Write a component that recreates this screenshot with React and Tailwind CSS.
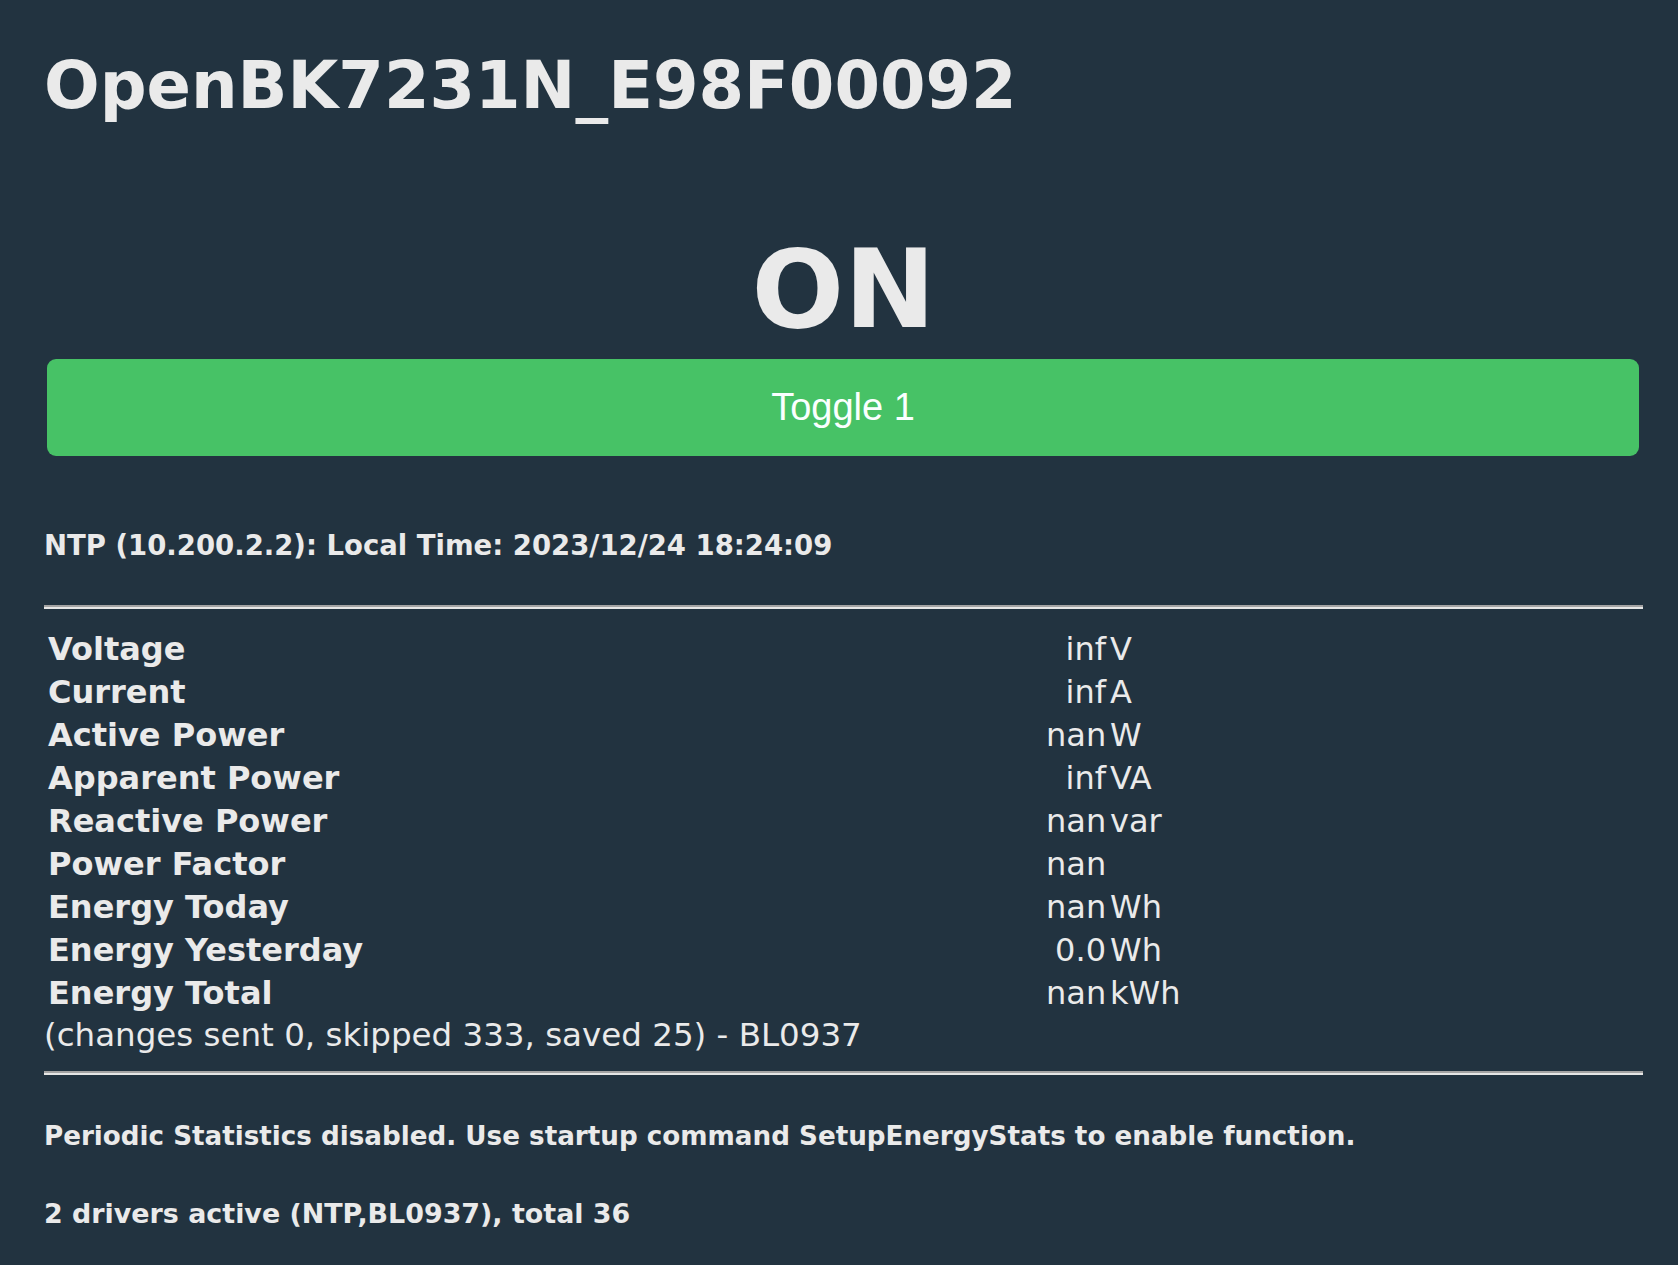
import React from 'react';

const readings = [
  { label: 'Voltage', value: 'inf', unit: 'V' },
  { label: 'Current', value: 'inf', unit: 'A' },
  { label: 'Active Power', value: 'nan', unit: 'W' },
  { label: 'Apparent Power', value: 'inf', unit: 'VA' },
  { label: 'Reactive Power', value: 'nan', unit: 'var' },
  { label: 'Power Factor', value: 'nan', unit: '' },
  { label: 'Energy Today', value: 'nan', unit: 'Wh' },
  { label: 'Energy Yesterday', value: '0.0', unit: 'Wh' },
  { label: 'Energy Total', value: 'nan', unit: 'kWh' },
];

const Rule = ({ className }) => (
  <div className={`border-t-2 border-b-2 border-t-[#a3a3a3] border-b-[#e6e6e6] ${className}`}></div>
);

const App = () => {
  return (
    <div className="min-h-screen bg-[#223340] text-[#eaeaea] pl-[44px] pr-[35px] pb-[40px] font-['DejaVu_Sans',Verdana,sans-serif]">
      <h1 className="pt-[46px] text-[65.5px] font-bold leading-[78px]">OpenBK7231N_E98F00092</h1>

      <div className="mt-[101px] text-center text-[109px] font-bold leading-[130px]">ON</div>

      <div className="mt-[4px] pl-[3px] pr-[4px]">
        <button className="w-full h-[97px] rounded-[9px] bg-[#47c266] text-[#faffff] text-[38px] font-['Liberation_Sans',Arial,sans-serif]">
          Toggle 1
        </button>
      </div>

      <h5 className="mt-[73px] text-[27.5px] font-bold leading-[33px]">
        NTP (10.200.2.2): Local Time: 2023/12/24 18:24:09
      </h5>

      <Rule className="mt-[43px]" />

      {/* energy meter readings */}
      <div className="mt-[19px] pl-[4px] grid grid-cols-[994px_60px_1fr] gap-x-[4px] text-[32px] leading-[43px]">
        {readings.map((r) => (
          <React.Fragment key={r.label}>
            <div className="font-bold">{r.label}</div>
            <div className="text-right">{r.value}</div>
            <div>{r.unit}</div>
          </React.Fragment>
        ))}
      </div>

      <p className="mt-[1px] text-[32.5px] leading-[39px]">(changes sent 0, skipped 333, saved 25) - BL0937</p>

      <Rule className="mt-[16px]" />

      <h5 className="mt-[45px] text-[26.2px] font-bold leading-[33px]">
        Periodic Statistics disabled. Use startup command SetupEnergyStats to enable function.
      </h5>
      <h5 className="mt-[44px] text-[26.9px] font-bold leading-[33px]">2 drivers active (NTP,BL0937), total 36</h5>
    </div>
  );
};

export default App;
